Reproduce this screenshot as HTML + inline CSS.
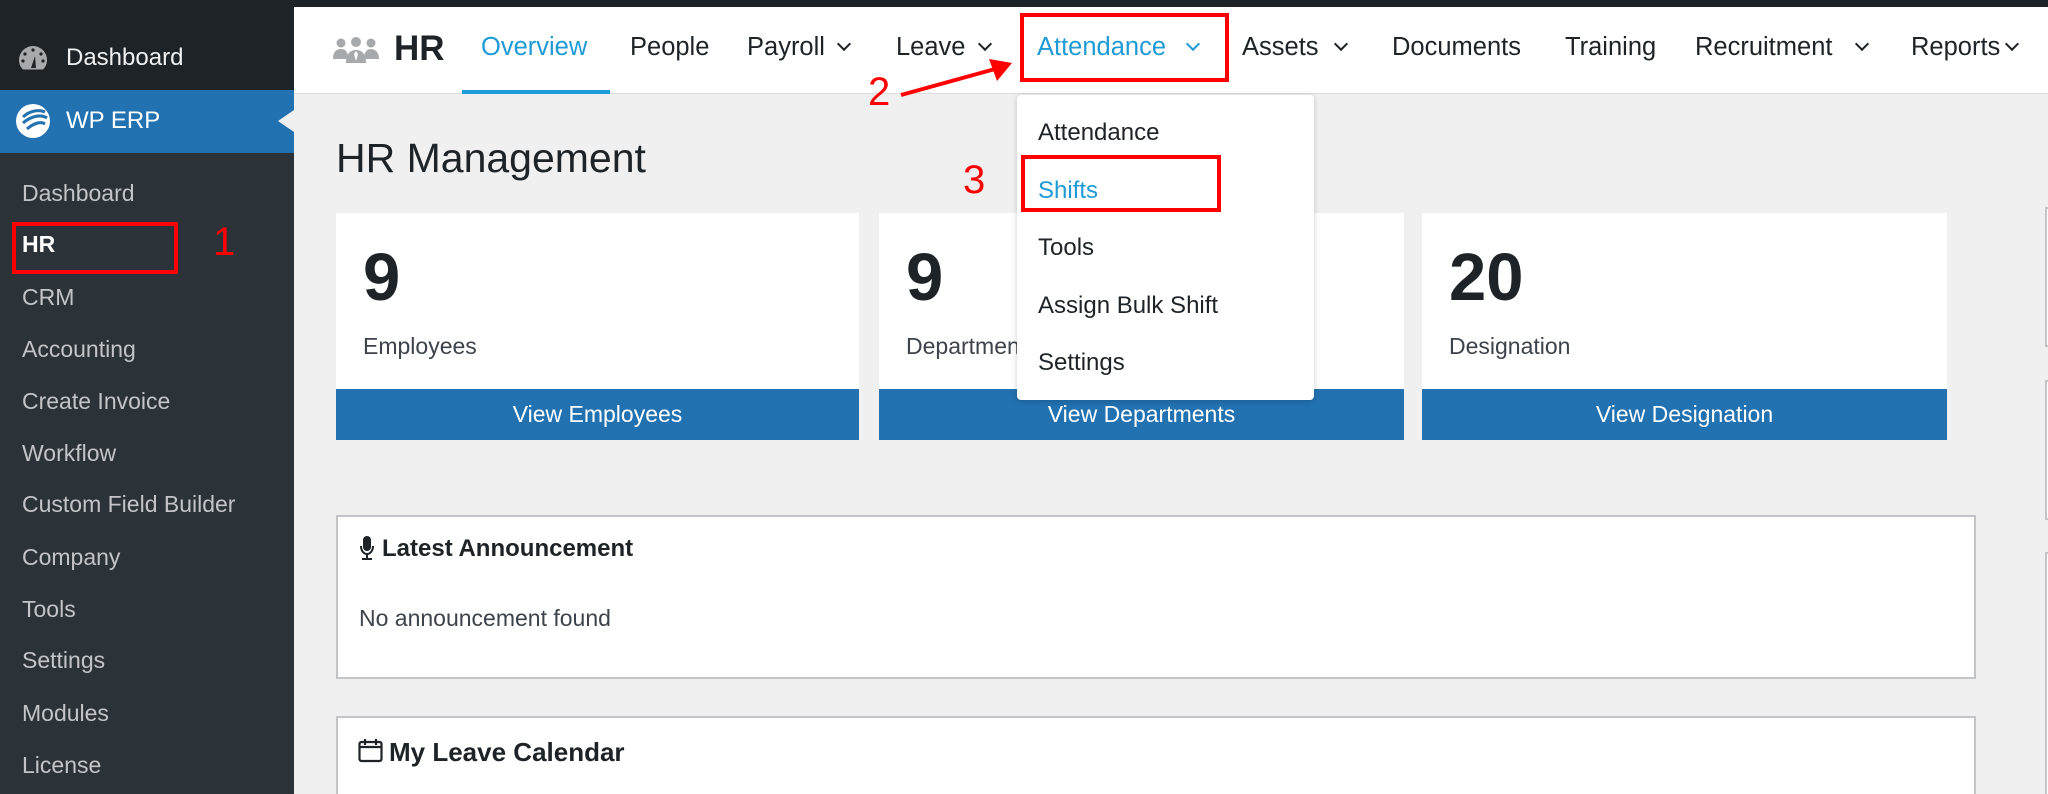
<!DOCTYPE html>
<html><head><meta charset="utf-8"><style>
*{margin:0;padding:0;box-sizing:border-box}
html,body{width:2048px;height:794px;overflow:hidden}
body{background:#f0f0f1;font-family:"Liberation Sans",sans-serif;position:relative}
.abs{position:absolute;white-space:nowrap}
#top{left:0;top:0;width:2048px;height:7px;background:#1d2327}
#side{left:0;top:0;width:294px;height:794px;background:#2c3338}
#sdash{left:0;top:0;width:294px;height:90px;background:#1d2327}
#sblue{left:0;top:90px;width:294px;height:63px;background:#2271b1}
.sm{left:22px;font-size:23px;color:#c3c4c7;line-height:28px}
#hdr{left:294px;top:7px;width:1754px;height:87px;background:#fff;border-bottom:1px solid #dcdcde}
.nav{top:32px;font-size:25.5px;color:#1d2327;line-height:30px}
.chev{top:39px;width:10px;height:10px;border-right:2.5px solid #1d2327;border-bottom:2.5px solid #1d2327;transform:rotate(45deg)}
.card{background:#fff;top:213px;height:227px}
.card .n{position:absolute;left:27px;top:26px;font-size:67px;font-weight:bold;color:#1d2327}
.card .l{position:absolute;left:27px;top:120px;font-size:23px;color:#3c434a}
.card .b{position:absolute;left:0;bottom:0;width:100%;height:51px;background:#2271b1;color:#fff;font-size:23px;text-align:center;line-height:51px}
.box{background:#fff;border:2px solid #c3c4c7;left:336px;width:1640px}
.red{position:absolute;border:4px solid #f00}
.rn{position:absolute;color:#f00;font-size:40px;font-family:"Liberation Sans",sans-serif}
.dd{left:1038px;font-size:24px;color:#1d2327}
</style></head><body>
<div id="side" class="abs"></div>
<div id="sdash" class="abs"></div>
<div id="sblue" class="abs"></div>
<div id="top" class="abs"></div>
<svg class="abs" style="left:17px;top:44px" width="32" height="30" viewBox="0 0 32 30"><path d="M16 2A14 14 0 0 0 2 16c0 4 1.5 7 4 9.5h20c2.5-2.5 4-5.5 4-9.5A14 14 0 0 0 16 2z" fill="#a7aaad"/><path d="M14 24l4-12 1 12z" fill="#1d2327"/><circle cx="16" cy="6" r="1.6" fill="#1d2327"/><circle cx="8" cy="10" r="1.6" fill="#1d2327"/><circle cx="24" cy="10" r="1.6" fill="#1d2327"/><circle cx="6" cy="17" r="1.6" fill="#1d2327"/><circle cx="26" cy="17" r="1.6" fill="#1d2327"/></svg>
<div class="abs" style="left:66px;top:44px;font-size:24px;color:#f0f0f1">Dashboard</div>
<svg class="abs" style="left:15px;top:103px" width="36" height="36" viewBox="0 0 36 36"><circle cx="18" cy="18" r="17" fill="#fff"/><path d="M8 14c6-6 16-8 22-5M8 20c8-7 18-9 24-5M12 26c7-6 14-8 18-5" stroke="#2271b1" stroke-width="3" fill="none"/></svg>
<div class="abs" style="left:66px;top:107px;font-size:24px;color:#fff">WP ERP</div>
<div class="abs" style="left:278px;top:110px;width:0;height:0;border-top:11px solid transparent;border-bottom:11px solid transparent;border-right:16px solid #f0f0f1"></div>
<div class="abs sm" style="top:179px">Dashboard</div>
<div class="abs sm" style="top:230px;color:#fff;font-weight:bold">HR</div>
<div class="abs sm" style="top:283px">CRM</div>
<div class="abs sm" style="top:335px">Accounting</div>
<div class="abs sm" style="top:387px">Create Invoice</div>
<div class="abs sm" style="top:439px">Workflow</div>
<div class="abs sm" style="top:490px">Custom Field Builder</div>
<div class="abs sm" style="top:543px">Company</div>
<div class="abs sm" style="top:595px">Tools</div>
<div class="abs sm" style="top:646px">Settings</div>
<div class="abs sm" style="top:699px">Modules</div>
<div class="abs sm" style="top:751px">License</div>
<div class="red" style="left:12px;top:222px;width:166px;height:52px"></div>
<div class="rn" style="left:213px;top:220px">1</div>

<div id="hdr" class="abs"></div>
<svg class="abs" style="left:333px;top:37px" width="46" height="26" viewBox="0 0 46 26"><g fill="#a7aaad"><circle cx="8" cy="6" r="4.5"/><path d="M0 22c0-7 3-10 8-10s7 3 7 10z"/><circle cx="38" cy="6" r="4.5"/><path d="M31 22c0-7 3-10 7-10s8 3 8 10z"/><circle cx="23" cy="5" r="5"/><path d="M13 26c0-9 4-13 10-13s10 4 10 13z"/></g><path d="M23 14l-2 3 2 7 2-7z" fill="#fff"/></svg>
<div class="abs" style="left:394px;top:29px;font-size:35px;font-weight:bold;color:#1d2327">HR</div>
<div class="abs nav" style="left:481px;color:#1e9bd7">Overview</div>
<div class="abs" style="left:462px;top:90px;width:148px;height:4px;background:#1e9bd7"></div>
<div class="abs nav" style="left:630px">People</div>
<div class="abs nav" style="left:747px">Payroll</div><div class="abs chev" style="left:839px"></div>
<div class="abs nav" style="left:896px">Leave</div><div class="abs chev" style="left:980px"></div>
<div class="abs nav" style="left:1037px;color:#1e9bd7">Attendance</div><div class="abs chev" style="left:1188px;border-color:#1e9bd7"></div>
<div class="abs nav" style="left:1242px">Assets</div><div class="abs chev" style="left:1336px"></div>
<div class="abs nav" style="left:1392px">Documents</div>
<div class="abs nav" style="left:1565px">Training</div>
<div class="abs nav" style="left:1695px">Recruitment</div><div class="abs chev" style="left:1857px"></div>
<div class="abs nav" style="left:1911px">Reports</div><div class="abs chev" style="left:2007px"></div>
<div class="red" style="left:1020px;top:13px;width:209px;height:69px"></div>
<svg class="abs" style="left:895px;top:55px" width="125" height="45"><path d="M6 40L100 14" stroke="#f00" stroke-width="4"/><path d="M117 8L94 4l8 22z" fill="#f00"/></svg>
<div class="rn" style="left:868px;top:70px">2</div>

<div class="abs" style="left:336px;top:135px;font-size:41px;color:#1d2327">HR Management</div>
<div class="abs card" style="left:336px;width:523px"><div class="n">9</div><div class="l">Employees</div><div class="b">View Employees</div></div>
<div class="abs card" style="left:879px;width:525px"><div class="n">9</div><div class="l">Departments</div><div class="b">View Departments</div></div>
<div class="abs card" style="left:1422px;width:525px"><div class="n">20</div><div class="l">Designation</div><div class="b">View Designation</div></div>
<div class="abs" style="left:2045px;top:207px;width:10px;height:140px;border:2px solid #c3c4c7;background:#fff"></div>
<div class="abs" style="left:2045px;top:380px;width:10px;height:140px;border:2px solid #c3c4c7;background:#fff"></div>
<div class="abs" style="left:2045px;top:552px;width:10px;height:242px;border:2px solid #c3c4c7;border-bottom:none;background:#fff"></div>

<div class="abs box" style="top:515px;height:164px"></div>
<svg class="abs" style="left:359px;top:535px" width="16" height="26" viewBox="0 0 16 26"><rect x="4" y="1" width="8" height="15" rx="4" fill="#1d2327"/><path d="M2 11c0 5 3 8 6 8s6-3 6-8M8 19v4M3 24h10" stroke="#1d2327" stroke-width="2" fill="none"/></svg>
<div class="abs" style="left:382px;top:535px;font-size:24px;font-weight:bold;color:#1d2327">Latest Announcement</div>
<div class="abs" style="left:359px;top:605px;font-size:23px;color:#3c434a">No announcement found</div>
<div class="abs box" style="top:716px;height:78px;border-bottom:none"></div>
<svg class="abs" style="left:358px;top:738px" width="25" height="25" viewBox="0 0 25 25"><rect x="1.5" y="4" width="22" height="19" rx="2" fill="none" stroke="#1d2327" stroke-width="2.2"/><path d="M1.5 9h22M7 1v6M18 1v6" stroke="#1d2327" stroke-width="2.2"/></svg>
<div class="abs" style="left:389px;top:737px;font-size:26px;font-weight:bold;color:#1d2327">My Leave Calendar</div>

<div class="abs" style="left:1017px;top:95px;width:297px;height:305px;background:#fff;border-radius:4px;box-shadow:0 1px 6px rgba(0,0,0,.2)"></div>
<div class="abs dd" style="top:119px">Attendance</div>
<div class="abs dd" style="top:177px;color:#1e9bd7">Shifts</div>
<div class="abs dd" style="top:234px">Tools</div>
<div class="abs dd" style="top:292px">Assign Bulk Shift</div>
<div class="abs dd" style="top:349px">Settings</div>
<div class="red" style="left:1021px;top:155px;width:200px;height:57px"></div>
<div class="rn" style="left:963px;top:158px">3</div>
</body></html>
